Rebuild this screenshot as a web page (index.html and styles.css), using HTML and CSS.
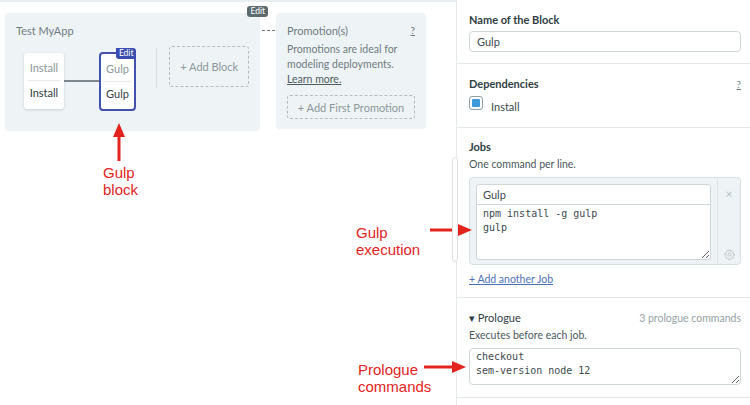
FILE: index.html
```html
<!DOCTYPE html>
<html lang="en">
<head>
    <meta charset="UTF-8">
    <meta name="viewport" content="width=device-width, initial-scale=1.0">
    <title>Workflow Builder - Gulp block</title>
    <link rel="stylesheet" href="styles.css">
</head>
<body>
    <div class="page">
        <div class="canvas">
            <div class="canvas-row">
                <div class="pipeline">
                    <span class="badge badge-dark pipeline-edit">Edit</span>
                    <div class="pipeline-title">Test MyApp</div>
                    <div class="blocks">
                        <div class="block">
                            <div class="block-name">Install</div>
                            <div class="block-job">Install</div>
                        </div>
                        <div class="connector"></div>
                        <div class="block block-active">
                            <span class="badge badge-blue block-edit">Edit</span>
                            <div class="block-name">Gulp</div>
                            <div class="block-job">Gulp</div>
                        </div>
                        <div class="blocks-divider"></div>
                        <div class="add-block">+ Add Block</div>
                    </div>
                </div>
                <div class="promo-link"></div>
                <div class="promotions">
                    <div class="promo-head">
                        <span>Promotion(s)</span>
                        <span class="help">?</span>
                    </div>
                    <p class="promo-text">Promotions are ideal for modeling deployments. <a href="#">Learn more.</a></p>
                    <div class="add-promo">+ Add First Promotion</div>
                </div>
            </div>

            <div class="note note-block">Gulp<br>block</div>
            <div class="note note-exec">Gulp<br>execution</div>
            <div class="note note-prologue">Prologue<br>commands</div>

            <svg class="arrow arrow-up" width="14" height="38" viewBox="0 0 14 38">
                <polygon points="7,0 13,14 1,14" fill="#e3241d"/>
                <rect x="5.5" y="12" width="3" height="26" fill="#e3241d"/>
            </svg>
            <svg class="arrow arrow-exec" width="42" height="14" viewBox="0 0 42 14">
                <rect x="0" y="5.5" width="30" height="3" fill="#e3241d"/>
                <polygon points="42,7 28,1 28,13" fill="#e3241d"/>
            </svg>
            <svg class="arrow arrow-prologue" width="42" height="14" viewBox="0 0 42 14">
                <rect x="0" y="5.5" width="30" height="3" fill="#e3241d"/>
                <polygon points="42,7 28,1 28,13" fill="#e3241d"/>
            </svg>

            <div class="scroll-thumb"></div>
        </div>

        <div class="panel">
            <section class="section sec-name">
                <label class="label" for="blockName">Name of the Block</label>
                <input class="field" type="text" id="blockName" value="Gulp">
            </section>

            <section class="section sec-deps">
                <div class="label-row">
                    <span class="label">Dependencies</span>
                    <span class="help">?</span>
                </div>
                <div class="dep">
                    <span class="checkbox"><span class="checkbox-fill"></span></span>
                    <span class="dep-name">Install</span>
                </div>
            </section>

            <section class="section sec-jobs">
                <div class="label">Jobs</div>
                <div class="hint">One command per line.</div>
                <div class="job">
                    <div class="job-main">
                        <input class="job-name" type="text" value="Gulp">
                        <textarea class="job-cmds">npm install -g gulp
gulp</textarea>
                    </div>
                    <div class="job-side">
                        <span class="job-remove">&times;</span>
                        <svg class="job-gear" width="11" height="11" viewBox="0 0 24 24">
                            <path d="M12 8.5a3.5 3.5 0 1 0 0 7a3.5 3.5 0 1 0 0-7z M10.3 2h3.4l.5 2.6 1.9.8 2.2-1.5 2.4 2.4-1.5 2.2.8 1.9 2.6.5v3.4l-2.6.5-.8 1.9 1.5 2.2-2.4 2.4-2.2-1.5-1.9.8-.5 2.6h-3.4l-.5-2.6-1.9-.8-2.2 1.5-2.4-2.4 1.5-2.2-.8-1.9L2 13.7v-3.4l2.6-.5.8-1.9-1.5-2.2 2.4-2.4 2.2 1.5 1.9-.8z" fill="none" stroke="#b9c2c6" stroke-width="1.8" stroke-linejoin="round"/>
                        </svg>
                    </div>
                </div>
                <a class="add-job" href="#">+ Add another Job</a>
            </section>

            <section class="section sec-prologue">
                <div class="label-row">
                    <span class="toggle">&#9662; Prologue</span>
                    <span class="count">3 prologue commands</span>
                </div>
                <div class="hint">Executes before each job.</div>
                <textarea class="prologue">checkout
sem-version node 12</textarea>
            </section>
        </div>
    </div>
</body>
</html>
```

FILE: styles.css
```css
body {
    margin: 0;
    font-family: Lato, "Noto Sans", sans-serif;
    font-size: 11px;
    color: #2f3d42;
    background-color: #fff;
}

.page {
    display: flex;
    width: 750px;
    height: 405px;
    overflow: hidden;
}

/* left side: workflow canvas */

.canvas {
    position: relative;
    width: 456px;
    flex-shrink: 0;
    border-top: 2px solid #e9eef0;
    box-sizing: border-box;
    padding: 11px 0 0 5px;
}

.canvas-row {
    display: flex;
    align-items: flex-start;
}

.pipeline {
    position: relative;
    width: 255px;
    height: 118px;
    box-sizing: border-box;
    padding: 11px 11px 0 11px;
    background-color: #eef3f5;
    border-radius: 4px;
}

.pipeline-title {
    color: #6f7d82;
    font-size: 11px;
}

.badge {
    position: absolute;
    font-size: 8.5px;
    color: #fff;
    line-height: 11px;
    padding: 0 3px;
    border-radius: 3px;
}

.badge-dark {
    background-color: #5c6b70;
}

.badge-blue {
    background-color: #3b4cb0;
    border-radius: 0 3px 0 3px;
}

.pipeline-edit {
    top: -7px;
    right: -8px;
}

.blocks {
    display: flex;
    align-items: flex-start;
    margin-top: 9px;
}

.block {
    width: 40px;
    margin: 7px 0 0 8px;
    padding: 3px 4px 4px;
    box-sizing: border-box;
    background-color: #fff;
    border-radius: 3px;
    box-shadow: 0 1px 3px rgba(0, 0, 0, 0.15);
    text-align: center;
}

.block-name,
.block-job {
    line-height: 24px;
}

.block-name {
    color: #8a969a;
    border-bottom: 1px solid #e6eaec;
}

.block-job {
    color: #2f3d42;
}

.block-active {
    position: relative;
    width: 38px;
    margin: 6px 0 0 0;
    padding: 3px 3px;
    border: 2px solid #4351ad;
    border-radius: 4px;
    box-shadow: none;
}

.block-edit {
    top: -6px;
    right: -2px;
}

.connector {
    width: 35px;
    height: 2px;
    margin-top: 34px;
    background-color: #7c878b;
}

.blocks-divider {
    width: 1px;
    height: 40px;
    margin: 2px 12px 0 20px;
    background-color: #d8dfe2;
}

.add-block {
    width: 80px;
    height: 41px;
    box-sizing: border-box;
    border: 1px dashed #b4bec2;
    border-radius: 3px;
    color: #8c989c;
    display: flex;
    align-items: center;
    justify-content: center;
}

.promo-link {
    width: 13px;
    margin: 17px 1px 0 2px;
    border-top: 1px dashed #6f7b80;
}

.promotions {
    width: 150px;
    height: 116px;
    box-sizing: border-box;
    padding: 11px 11px;
    background-color: #eef3f5;
    border-radius: 4px;
    color: #6f7d82;
}

.promo-head {
    display: flex;
    justify-content: space-between;
}

.help {
    color: #6f7d82;
    text-decoration: underline;
    font-size: 10px;
}

.promo-text {
    margin: 5px 0 0 0;
    font-size: 10.5px;
    line-height: 15px;
}

.promo-text a {
    color: #4f5c61;
}

.add-promo {
    margin-top: 8px;
    height: 22px;
    border: 1px dashed #b4bec2;
    border-radius: 3px;
    color: #8c989c;
    display: flex;
    align-items: center;
    justify-content: center;
}

/* annotations */

.note {
    position: absolute;
    font-family: "Liberation Sans", Arial, sans-serif;
    font-size: 15px;
    line-height: 17px;
    color: #e3241d;
}

.note-block {
    left: 103px;
    top: 162px;
}

.note-exec {
    left: 356px;
    top: 222px;
}

.note-prologue {
    left: 358px;
    top: 359px;
}

.arrow {
    position: absolute;
}

.arrow-up {
    left: 112px;
    top: 121px;
}

.arrow-exec {
    left: 430px;
    top: 221px;
}

.arrow-prologue {
    left: 424px;
    top: 358px;
}

.scroll-thumb {
    position: absolute;
    left: 452px;
    top: 155px;
    width: 4px;
    height: 103px;
    background-color: #fff;
    border: 1px solid #dde3e5;
    border-radius: 3px;
}

/* right side: block settings */

.panel {
    flex: 1;
    border-left: 1px solid #e4e9eb;
}

.section {
    padding: 0 9px 0 12px;
    border-bottom: 1px solid #e4e9eb;
    box-sizing: border-box;
}

.sec-name {
    height: 64px;
    padding-top: 13px;
}

.sec-deps {
    height: 64px;
    padding-top: 13px;
}

.sec-jobs {
    height: 170px;
    padding-top: 12px;
}

.sec-prologue {
    height: 100px;
    padding-top: 13px;
}

.label {
    display: block;
    font-weight: bold;
    font-size: 11px;
    line-height: 14px;
    color: #2f3d42;
}

.label-row {
    display: flex;
    justify-content: space-between;
    align-items: center;
    line-height: 14px;
}

.field {
    display: block;
    width: 100%;
    height: 21px;
    margin-top: 4px;
    box-sizing: border-box;
    padding: 0 7px;
    border: 1px solid #cfd6d9;
    border-radius: 4px;
    font-family: inherit;
    font-size: 11px;
    color: #3c494e;
    outline: none;
}

.dep {
    display: flex;
    align-items: flex-start;
    gap: 8px;
    margin-top: 5px;
    color: #3c494e;
}

.dep-name {
    padding-top: 4px;
}

.checkbox {
    width: 14px;
    height: 14px;
    box-sizing: border-box;
    border: 1px solid #8fa0a7;
    border-radius: 3px;
    padding: 2px;
    background-color: #fff;
}

.checkbox-fill {
    display: block;
    width: 100%;
    height: 100%;
    background-color: #3d9bd9;
    border-radius: 1px;
}

.hint {
    margin-top: 3px;
    color: #4a575c;
    font-size: 10.5px;
    line-height: 14px;
}

.job {
    display: flex;
    margin-top: 6px;
    height: 88px;
    box-sizing: border-box;
    border: 1px solid #d8e0e3;
    border-radius: 4px;
    background-color: #eef3f5;
}

.job-main {
    flex: 1;
    padding: 6px 6px 4px 6px;
    display: flex;
    flex-direction: column;
}

.job-name {
    height: 21px;
    box-sizing: border-box;
    padding: 0 6px;
    border: 1px solid #cfd6d9;
    border-radius: 3px 3px 0 0;
    font-family: inherit;
    font-size: 11px;
    color: #3c494e;
    outline: none;
}

.job-cmds,
.prologue {
    font-family: "DejaVu Sans Mono", "Liberation Mono", monospace;
    font-size: 10px;
    line-height: 14px;
    color: #3c494e;
    border: 1px solid #cfd6d9;
    outline: none;
    resize: vertical;
    box-sizing: border-box;
}

.job-cmds {
    flex: 1;
    border-top: none;
    border-radius: 0 0 3px 3px;
    padding: 2px 6px;
}

.job-side {
    width: 22px;
    border-left: 1px solid #dfe6e8;
    display: flex;
    flex-direction: column;
    justify-content: space-between;
    align-items: center;
}

.job-remove {
    color: #b6c0c4;
    font-size: 12px;
    margin-top: 8px;
}

.job-gear {
    margin-bottom: 4px;
}

.add-job {
    display: inline-block;
    margin-top: 8px;
    color: #4c6fb5;
    font-size: 10.5px;
}

.toggle {
    color: #2f3d42;
}

.count {
    color: #96a2a6;
    font-size: 10.5px;
}

.prologue {
    display: block;
    width: 100%;
    height: 37px;
    margin-top: 6px;
    padding: 1px 6px;
    border-radius: 4px;
}
```
